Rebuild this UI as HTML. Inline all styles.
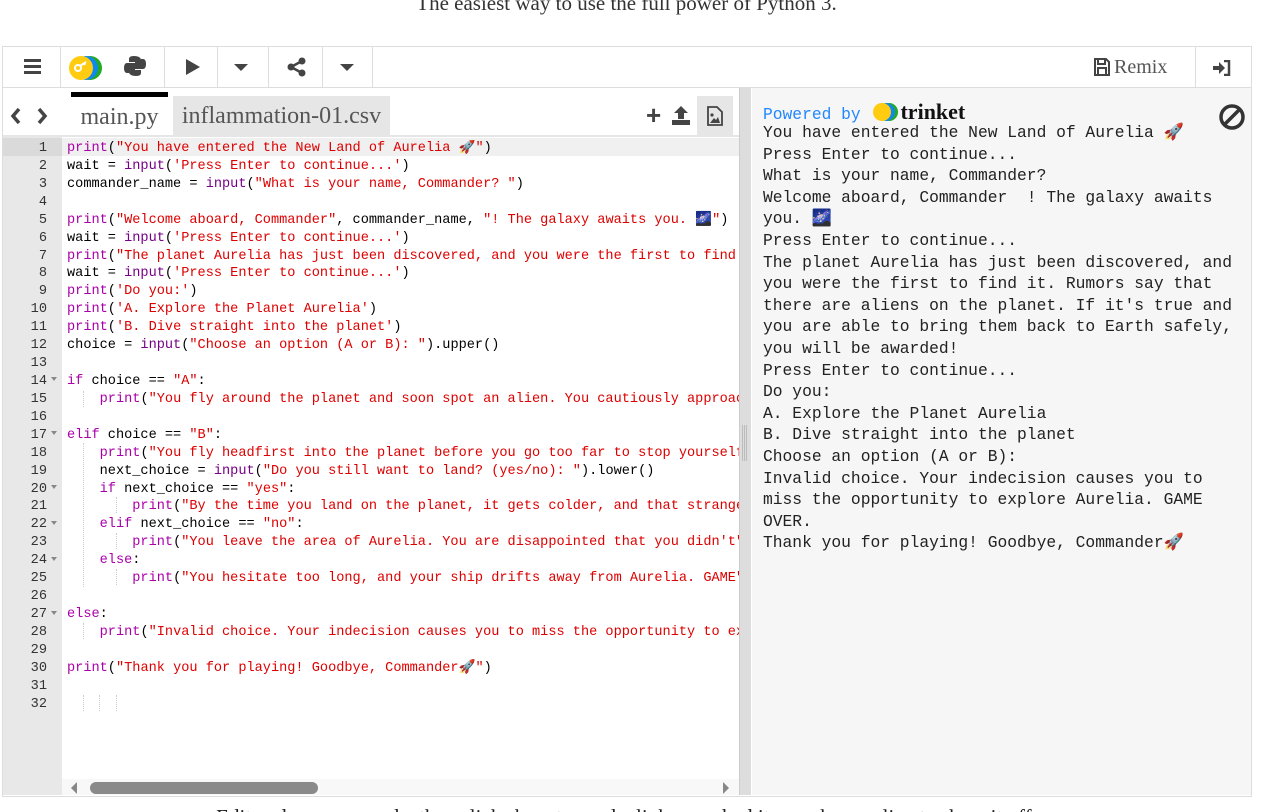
<!DOCTYPE html>
<html style="overflow:hidden;height:812px"><head><meta charset="utf-8"><style>
html,body{margin:0;width:1263px;height:812px;overflow:hidden}
body{background:#fff;position:relative;font-family:"Liberation Serif",serif}
#w{position:relative;width:1263px;height:812px;overflow:hidden}
.abs{position:absolute}
.top{left:0;width:1253px;top:-9px;text-align:center;font-size:21px;color:#333}
.frame{left:2px;top:46px;width:1248px;height:749px;border:1px solid #ddd}
.tb{left:3px;top:47px;width:1248px;height:40px;border-bottom:1px solid #ddd;background:#fff}
.sep{top:47px;width:1px;height:40px;background:#ddd}
.gut{left:3px;top:137px;width:59px;height:658px;background:#e8e8e8}
.code{font-family:"Liberation Mono",monospace;font-size:13.6px;color:#000}
.ln{left:3px;width:44px;text-align:right;color:#333;font-family:"Liberation Mono",monospace;font-size:13.6px}
.row{height:17.93px;line-height:17.93px;white-space:pre}
.k{color:#a0a}.s{color:#d00}.b{color:#708}
.out{left:752px;top:88px;width:499px;height:707px;background:#f6f6f6}
.o{font-family:"Liberation Mono",monospace;font-size:16.3px;line-height:21.6px;color:#222;white-space:pre}
.f{position:absolute;left:51px;width:0;height:0;border-left:3.5px solid transparent;border-right:3.5px solid transparent;border-top:4px solid #888}
.g{position:absolute;width:0;border-left:1px dotted #ccc}
</style></head><body><div id="w">
<div class="abs top">The easiest way to use the full power of Python 3.</div>
<div class="abs" style="left:0;width:1253px;top:805px;text-align:center;font-size:21px;color:#222;white-space:nowrap">Edit and run your code, then click share to send a link or embed it anywhere online to show it off.</div>
<div class="abs frame"></div>
<div class="abs tb"></div>
<div class="abs sep" style="left:60px"></div><div class="abs sep" style="left:164px"></div><div class="abs sep" style="left:217px"></div><div class="abs sep" style="left:268px"></div><div class="abs sep" style="left:322px"></div><div class="abs sep" style="left:372px"></div><div class="abs sep" style="left:1195px"></div>
<div class="abs" style="left:24px;top:59px;width:17px;height:3px;background:#444;box-shadow:0 6px 0 #444,0 12px 0 #444"></div>
<svg class="abs" style="left:66px;top:54px" width="40" height="28"><circle cx="24" cy="14" r="12" fill="#2a2"/><circle cx="20" cy="14" r="12" fill="#18e"/><circle cx="15" cy="14" r="12" fill="#fc1"/><circle cx="12" cy="14" r="3" fill="none" stroke="#fff" stroke-width="2"/><path d="M14 12 L20 8 M18 9 l1 2" stroke="#fff" stroke-width="2"/></svg>
<svg class="abs" style="left:124px;top:55px" width="22" height="22"><path d="M10 1c-5 0-5 2-5 4v2h6v1H3c-2 0-3 2-3 5s1 5 3 5h2v-3c0-2 2-3 4-3h5c2 0 3-1 3-3V5c0-2-2-4-7-4z" fill="#444"/><path d="M12 21c5 0 5-2 5-4v-2h-6v-1h8c2 0 3-2 3-5s-1-5-3-5h-2v3c0 2-2 3-4 3H8c-2 0-3 1-3 3v4c0 2 2 4 7 4z" fill="#444"/></svg>
<svg class="abs" style="left:184px;top:58px" width="18" height="18"><path d="M2 1L16 9L2 17Z" fill="#444"/></svg>
<svg class="abs" style="left:234px;top:64px" width="14" height="8"><path d="M0 0H14L7 7Z" fill="#444"/></svg>
<svg class="abs" style="left:287px;top:57px" width="20" height="20"><circle cx="15" cy="4" r="3.5" fill="#444"/><circle cx="4" cy="10" r="3.5" fill="#444"/><circle cx="15" cy="16" r="3.5" fill="#444"/><path d="M15 4L4 10L15 16" stroke="#444" stroke-width="2.5" fill="none"/></svg>
<svg class="abs" style="left:340px;top:64px" width="14" height="8"><path d="M0 0H14L7 7Z" fill="#444"/></svg>
<svg class="abs" style="left:1094px;top:58px" width="16" height="18"><path d="M1 1H12L15 4V17H1Z M4 1V6H11V1 M4 10H12V17H4Z" fill="none" stroke="#444" stroke-width="2"/></svg>
<div class="abs" style="left:1114px;top:56px;font-size:20px;color:#555">Remix</div>
<svg class="abs" style="left:1213px;top:60px" width="18" height="16"><path d="M0 6H6V2L12 8L6 14V10H0Z" fill="#444"/><path d="M11 1H16V15H11" fill="none" stroke="#444" stroke-width="2.5"/></svg>
<svg class="abs" style="left:10px;top:107px" width="38" height="18"><path d="M9 2L3 9L9 16 M29 2L35 9L29 16" fill="none" stroke="#444" stroke-width="3.5"/></svg>
<div class="abs" style="left:71px;top:92px;width:97px;height:5px;background:#000"></div>
<div class="abs" style="left:71px;top:97px;width:97px;height:39px;background:#fff;font-size:24px;color:#555;line-height:40px;text-align:center">main.py</div>
<div class="abs" style="left:173px;top:96px;width:217px;height:40px;background:#e6e6e6;font-size:24px;color:#555;line-height:40px;text-align:center">inflammation-01.csv</div>
<div class="abs" style="left:646px;top:100px;font-size:26px;font-weight:bold;color:#444;font-family:'Liberation Sans',sans-serif">+</div>
<svg class="abs" style="left:671px;top:106px" width="20" height="20"><path d="M10 0L17 7H13V13H7V7H3Z M1 14H19V19H1Z" fill="#444"/></svg>
<div class="abs" style="left:697px;top:96px;width:36px;height:40px;background:#e6e6e6"></div>
<svg class="abs" style="left:707px;top:106px" width="16" height="20"><path d="M1 1H10L15 6V19H1Z" fill="none" stroke="#444" stroke-width="1.8"/><circle cx="5" cy="9" r="1.6" fill="#444"/><path d="M3 17L7 12L9 14L11 11L13 17Z" fill="#444"/></svg>
<div class="abs" style="left:3px;top:135px;width:736px;height:2px;background:#e6e6e6"></div>
<div class="abs gut"></div>
<div class="abs" style="left:3px;top:138px;width:736px;height:18px;background:rgba(0,0,0,0.06)"></div>
<div class="abs ln" style="top:140px">
<div class="row">1</div><div class="row">2</div><div class="row">3</div><div class="row">4</div><div class="row">5</div><div class="row">6</div><div class="row">7</div><div class="row">8</div><div class="row">9</div><div class="row">10</div><div class="row">11</div><div class="row">12</div><div class="row">13</div><div class="row">14</div><div class="row">15</div><div class="row">16</div><div class="row">17</div><div class="row">18</div><div class="row">19</div><div class="row">20</div><div class="row">21</div><div class="row">22</div><div class="row">23</div><div class="row">24</div><div class="row">25</div><div class="row">26</div><div class="row">27</div><div class="row">28</div><div class="row">29</div><div class="row">30</div><div class="row">31</div><div class="row">32</div>
</div>
<div class="f" style="top:377px"></div><div class="f" style="top:431px"></div><div class="f" style="top:485px"></div><div class="f" style="top:521px"></div><div class="f" style="top:557px"></div><div class="f" style="top:611px"></div>
<div class="g" style="left:83px;top:391px;height:16px"></div>
<div class="g" style="left:83px;top:443px;height:144px"></div>
<div class="g" style="left:116px;top:497px;height:16px"></div>
<div class="g" style="left:116px;top:533px;height:16px"></div>
<div class="g" style="left:116px;top:569px;height:16px"></div>
<div class="g" style="left:83px;top:623px;height:16px"></div>
<div class="g" style="left:83px;top:695px;height:16px"></div><div class="g" style="left:99px;top:695px;height:16px"></div><div class="g" style="left:116px;top:695px;height:16px"></div>
<div class="abs code" style="left:67px;top:140px;width:672px;overflow:hidden">
<div class="row"><span class="k">print</span>(<span class="s">"You have entered the New Land of Aurelia 🚀"</span>)</div>
<div class="row">wait = <span class="b">input</span>(<span class="s">'Press Enter to continue...'</span>)</div>
<div class="row">commander_name = <span class="b">input</span>(<span class="s">"What is your name, Commander? "</span>)</div>
<div class="row"> </div>
<div class="row"><span class="k">print</span>(<span class="s">"Welcome aboard, Commander"</span>, commander_name, <span class="s">"! The galaxy awaits you. 🌌"</span>)</div>
<div class="row">wait = <span class="b">input</span>(<span class="s">'Press Enter to continue...'</span>)</div>
<div class="row"><span class="k">print</span>(<span class="s">"The planet Aurelia has just been discovered, and you were the first to find it."</span></div>
<div class="row">wait = <span class="b">input</span>(<span class="s">'Press Enter to continue...'</span>)</div>
<div class="row"><span class="k">print</span>(<span class="s">'Do you:'</span>)</div>
<div class="row"><span class="k">print</span>(<span class="s">'A. Explore the Planet Aurelia'</span>)</div>
<div class="row"><span class="k">print</span>(<span class="s">'B. Dive straight into the planet'</span>)</div>
<div class="row">choice = <span class="b">input</span>(<span class="s">"Choose an option (A or B): "</span>).upper()</div>
<div class="row"> </div>
<div class="row"><span class="k">if</span> choice == <span class="s">"A"</span>:</div>
<div class="row">    <span class="k">print</span>(<span class="s">"You fly around the planet and soon spot an alien. You cautiously approach it"</span></div>
<div class="row"> </div>
<div class="row"><span class="k">elif</span> choice == <span class="s">"B"</span>:</div>
<div class="row">    <span class="k">print</span>(<span class="s">"You fly headfirst into the planet before you go too far to stop yourself"</span></div>
<div class="row">    next_choice = <span class="b">input</span>(<span class="s">"Do you still want to land? (yes/no): "</span>).lower()</div>
<div class="row">    <span class="k">if</span> next_choice == <span class="s">"yes"</span>:</div>
<div class="row">        <span class="k">print</span>(<span class="s">"By the time you land on the planet, it gets colder, and that strange"</span></div>
<div class="row">    <span class="k">elif</span> next_choice == <span class="s">"no"</span>:</div>
<div class="row">        <span class="k">print</span>(<span class="s">"You leave the area of Aurelia. You are disappointed that you didn't"</span></div>
<div class="row">    <span class="k">else</span>:</div>
<div class="row">        <span class="k">print</span>(<span class="s">"You hesitate too long, and your ship drifts away from Aurelia. GAME"</span></div>
<div class="row"> </div>
<div class="row"><span class="k">else</span>:</div>
<div class="row">    <span class="k">print</span>(<span class="s">"Invalid choice. Your indecision causes you to miss the opportunity to explore"</span></div>
<div class="row"> </div>
<div class="row"><span class="k">print</span>(<span class="s">"Thank you for playing! Goodbye, Commander🚀"</span>)</div>
<div class="row"> </div>
<div class="row"> </div>
</div>
<div class="abs" style="left:62px;top:779px;width:677px;height:16px;background:#f8f8f8"></div>
<svg class="abs" style="left:70px;top:782px" width="8" height="12"><path d="M7 0L1 6L7 12Z" fill="#888"/></svg>
<div class="abs" style="left:90px;top:782px;width:228px;height:12px;border-radius:6px;background:#8a8a8a"></div>
<svg class="abs" style="left:722px;top:782px" width="8" height="12"><path d="M1 0L7 6L1 12Z" fill="#888"/></svg>
<div class="abs" style="left:739px;top:88px;width:11px;height:707px;background:#ddd;border-left:1px solid #ccc"></div>
<div class="abs" style="left:742px;top:425px;width:5px;height:36px;background:repeating-linear-gradient(90deg,#bbb 0 1px,#ddd 1px 2px)"></div>
<div class="abs out"></div>
<div class="abs o" style="left:763px;top:101px"><span style="color:#28f">Powered by </span><svg width="30" height="20" style="vertical-align:-3px"><circle cx="19" cy="10" r="9" fill="#2a2"/><circle cx="16" cy="10" r="9" fill="#18e"/><circle cx="12" cy="10" r="9" fill="#fc1"/></svg><b style="font-family:'Liberation Serif',serif;font-size:22px;color:#111">trinket</b></div>
<svg class="abs" style="left:1218px;top:103px" width="28" height="28"><circle cx="14" cy="14" r="11" fill="none" stroke="#333" stroke-width="3.5"/><path d="M6 22L22 6" stroke="#333" stroke-width="3.5"/></svg>
<div class="abs o" style="left:763px;top:122px">You have entered the New Land of Aurelia 🚀
Press Enter to continue...
What is your name, Commander?
Welcome aboard, Commander  ! The galaxy awaits
you. 🌌
Press Enter to continue...
The planet Aurelia has just been discovered, and
you were the first to find it. Rumors say that
there are aliens on the planet. If it's true and
you are able to bring them back to Earth safely,
you will be awarded!
Press Enter to continue...
Do you:
A. Explore the Planet Aurelia
B. Dive straight into the planet
Choose an option (A or B):
Invalid choice. Your indecision causes you to
miss the opportunity to explore Aurelia. GAME
OVER.
Thank you for playing! Goodbye, Commander🚀</div>
</div></body></html>
